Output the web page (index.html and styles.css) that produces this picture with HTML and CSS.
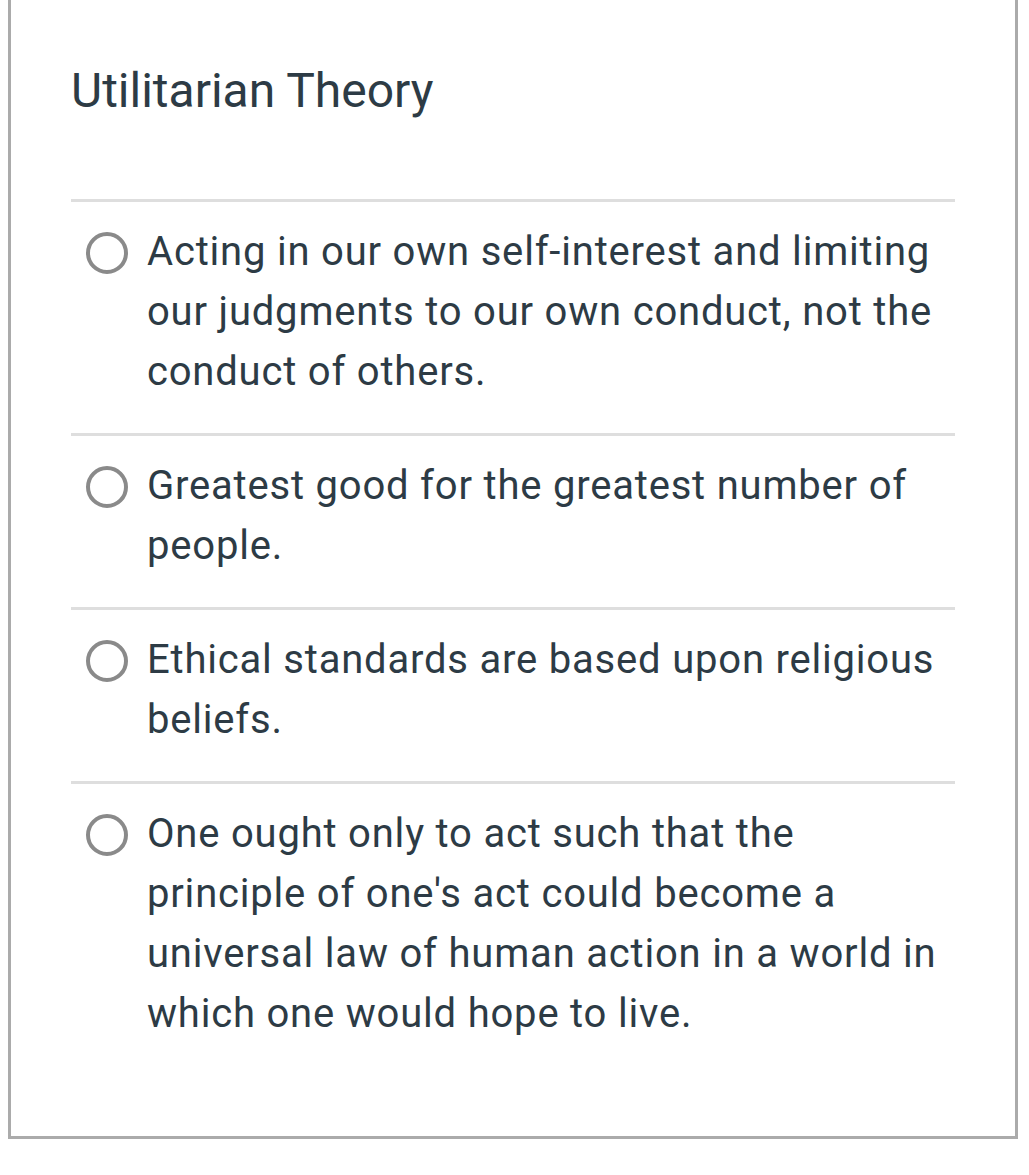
FILE: index.html
```html
<!DOCTYPE html>
<html lang="en">
<head>
<meta charset="utf-8">
<title>Utilitarian Theory</title>
<link rel="stylesheet" href="styles.css">
</head>
<body>
<div class="card">
  <h1 class="title">Utilitarian Theory</h1>
  <ul class="options">
    <li class="option"><span class="radio"></span><span class="label">Acting in our own self-interest and limiting our judgments to our own conduct, not the conduct of others.</span></li>
    <li class="option"><span class="radio"></span><span class="label">Greatest good for the greatest number of people.</span></li>
    <li class="option"><span class="radio"></span><span class="label">Ethical standards are based upon religious beliefs.</span></li>
    <li class="option"><span class="radio"></span><span class="label">One ought only to act such that the principle of one's act could become a universal law of human action in a world in which one would hope to live.</span></li>
  </ul>
</div>
</body>
</html>
```

FILE: styles.css
```css
html, body {
  margin: 0;
  padding: 0;
  background: #ffffff;
}
body {
  font-family: Roboto, "Liberation Sans", Arial, sans-serif;
  color: #2d3b45;
}
.card {
  box-sizing: border-box;
  margin-left: 8px;
  width: 1010px;
  border: 3px solid #ababab;
  border-top: none;
  padding: 61px 60px 61px 60px;
}
.title {
  margin: 0 0 78px 0;
  font-size: 48px;
  line-height: 60px;
  font-weight: 400;
}
.options {
  list-style: none;
  margin: 0;
  padding: 0;
}
.option {
  display: flex;
  align-items: flex-start;
  gap: 19px;
  border-top: 3px solid #dedede;
  padding: 20px 15px 31px 15px;
}
.radio {
  flex: none;
  box-sizing: border-box;
  width: 42px;
  height: 42px;
  margin-top: 10px;
  border: 4px solid #8a8a8a;
  border-radius: 50%;
}
.label {
  font-size: 40px;
  line-height: 60px;
  letter-spacing: 0.8px;
}
```
